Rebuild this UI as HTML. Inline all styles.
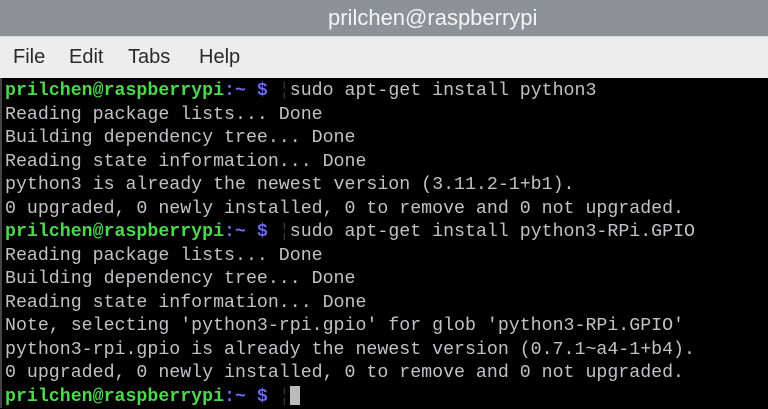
<!DOCTYPE html>
<html><head><style>
body{margin:0;width:768px;height:408px;overflow:hidden;background:#000;font-family:"Liberation Sans",sans-serif}
.t{position:absolute;left:0;top:0;width:768px;height:36px;background:#8b9399;color:#f4f4f4;font-size:22px;line-height:36px}
.t span{position:absolute;left:328px;top:0}
.m{position:absolute;left:0;top:36px;width:768px;height:42px;background:#ededed;border-top:1px solid #d8d8d8;font-size:20px;color:#2a2a2a}
.m span{position:absolute;top:9px}
.term{position:absolute;left:0;top:78px;width:768px;height:330px;background:#000;border-left:2px solid #444}
pre{margin:0;position:absolute;left:3px;top:2px;font-family:"Liberation Mono",monospace;font-size:18.25px;line-height:23.5px;color:#c0c2c4}
.g{color:#4cd84c;font-weight:bold}.b{color:#6a6af0;font-weight:bold}
.d{color:#333}
.c{display:inline-block;width:10px;height:19px;background:#bbb;vertical-align:-4px}
</style></head><body>
<div class="t"><span>prilchen@raspberrypi</span></div>
<div class="m"><span style="left:13px">File</span><span style="left:69px">Edit</span><span style="left:128px">Tabs</span><span style="left:199px">Help</span></div>
<div class="term"><pre><span class="g">prilchen@raspberrypi</span><span class="b">:~ $</span> <span class="d">¦</span>sudo apt-get install python3
Reading package lists... Done
Building dependency tree... Done
Reading state information... Done
python3 is already the newest version (3.11.2-1+b1).
0 upgraded, 0 newly installed, 0 to remove and 0 not upgraded.
<span class="g">prilchen@raspberrypi</span><span class="b">:~ $</span> <span class="d">¦</span>sudo apt-get install python3-RPi.GPIO
Reading package lists... Done
Building dependency tree... Done
Reading state information... Done
Note, selecting 'python3-rpi.gpio' for glob 'python3-RPi.GPIO'
python3-rpi.gpio is already the newest version (0.7.1~a4-1+b4).
0 upgraded, 0 newly installed, 0 to remove and 0 not upgraded.
<span class="g">prilchen@raspberrypi</span><span class="b">:~ $</span> <span class="d">¦</span><span class="c"></span></pre></div>
</body></html>
